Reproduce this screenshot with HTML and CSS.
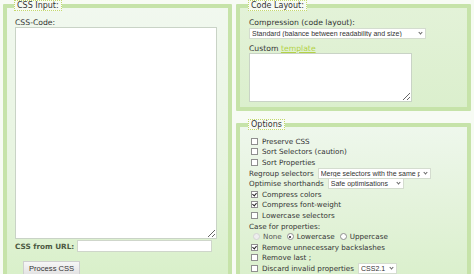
FILE: index.html
```html
<!DOCTYPE html>
<html lang="en">
<head>
    <meta charset="UTF-8">
    <title>CSSTidy</title>
    <link rel="stylesheet" href="styles.css">
</head>
<body>
    <div class="page">
        <!-- Left column: input -->
        <fieldset class="box input-box">
            <legend>CSS Input:</legend>
            <label class="field-label" for="css_text">CSS-Code:</label>
            <textarea id="css_text" class="code-area"></textarea>
            <div class="url-row">
                <label for="url">CSS from URL:</label>
                <input type="text" id="url" class="url-input">
            </div>
            <button class="process">Process CSS</button>
        </fieldset>

        <!-- Right column: layout and options -->
        <div class="side">
            <fieldset class="box layout-box">
                <legend>Code Layout:</legend>
                <label class="field-label" for="template">Compression (code layout):</label>
                <span class="sel wide-select">
                    <select id="template">
                        <option>Standard (balance between readability and size)</option>
                    </select>
                </span>
                <div class="field-label custom">Custom <a href="#">template</a></div>
                <textarea class="template-area"></textarea>
            </fieldset>

            <fieldset class="box options-box">
                <legend>Options</legend>
                <label class="opt"><input type="checkbox"> Preserve CSS</label>
                <label class="opt"><input type="checkbox"> Sort Selectors (caution)</label>
                <label class="opt"><input type="checkbox"> Sort Properties</label>
                <div class="opt-row">Regroup selectors
                    <span class="sel merge-select"><select><option>Merge selectors with the same properties</option></select></span>
                </div>
                <div class="opt-row">Optimise shorthands
                    <span class="sel short-select"><select><option>Safe optimisations</option></select></span>
                </div>
                <label class="opt"><input type="checkbox" checked> Compress colors</label>
                <label class="opt"><input type="checkbox" checked> Compress font-weight</label>
                <label class="opt"><input type="checkbox"> Lowercase selectors</label>
                <div class="opt-row">Case for properties:</div>
                <div class="radios">
                    <label class="off"><input type="radio" name="case" disabled> None</label>
                    <label><input type="radio" name="case" checked> Lowercase</label>
                    <label><input type="radio" name="case"> Uppercase</label>
                </div>
                <label class="opt"><input type="checkbox" checked> Remove unnecessary backslashes</label>
                <label class="opt"><input type="checkbox"> Remove last ;</label>
                <label class="opt"><input type="checkbox"> Discard invalid properties
                    <span class="sel level-select"><select><option>CSS2.1</option></select></span>
                </label>
            </fieldset>
        </div>
    </div>
</body>
</html>
```

FILE: styles.css
```css
/* Basic page styling */
body {
    margin: 0;
    background-color: #f7fbf4;
    font-family: "DejaVu Sans", Verdana, sans-serif;
    font-size: 7.5px;
    color: #333;
    overflow: hidden;
}
.page {
    display: flex;
    gap: 4px;
    padding: 0 3px;
    align-items: flex-start;
}
.box {
    margin: 0;
    border: 4px solid #c6e3a9;
    border-radius: 1px;
    min-width: 0;
}
.box legend {
    font-size: 8px;
    padding: 0 2px;
    margin-left: -1px;
    line-height: 9px;
    border: 1px dotted #c3d86c;
    background-color: #f7fbf4;
}
.input-box {
    width: 229px;
    box-sizing: border-box;
    height: 300px;
    padding: 7px 10px 0 8px;
    background: linear-gradient(#f1f8ef, #e6f4de 60%, #d6efc5);
}
.field-label {
    display: block;
    font-size: 7.7px;
    line-height: 9px;
}
.code-area {
    display: block;
    box-sizing: border-box;
    width: 202px;
    height: 212px;
    margin: 0;
    border: 1px solid #c9d3c6;
    background-color: #fff;
    resize: vertical;
}
.url-row {
    display: flex;
    align-items: center;
    gap: 3px;
    margin-top: 1px;
    font-size: 7.3px;
    font-weight: bold;
    color: #4d5a43;
}
.url-input {
    box-sizing: border-box;
    width: 135px;
    height: 12px;
    border: 1px solid #cfd6cb;
    background-color: #fff;
    padding: 0;
}
.process {
    display: block;
    margin: 9px 0 0 8px;
    height: 15px;
    padding: 0 5px;
    font-family: "Liberation Sans", Arial, sans-serif;
    font-size: 7.6px;
    color: #333;
    border: 1px solid #cfcfcf;
    background: linear-gradient(#f6f6f6, #e2e2e2);
}
.side {
    display: flex;
    flex-direction: column;
    gap: 8px;
    width: 235px;
}
.layout-box {
    box-sizing: border-box;
    padding: 7px 8px 5px 9px;
    background: linear-gradient(#e3f2d8, #dbefcd);
}
/* Selects with a small chevron */
.sel {
    position: relative;
    display: inline-block;
    height: 11px;
}
.sel select {
    appearance: none;
    box-sizing: border-box;
    width: 100%;
    height: 11px;
    margin: 0;
    padding: 0 10px 0 2px;
    font-family: "Liberation Sans", Arial, sans-serif;
    font-size: 7px;
    color: #333;
    border: 1px solid #d4dccf;
    border-radius: 0;
    background-color: #fff;
}
.sel::after {
    content: "";
    position: absolute;
    right: 4px;
    top: 3px;
    width: 2px;
    height: 2px;
    border-right: 1px solid #666;
    border-bottom: 1px solid #666;
    transform: rotate(45deg);
}
.wide-select {
    display: block;
    width: 177px;
    margin-top: 1px;
}
.custom {
    margin-top: 5px;
}
.custom a {
    color: #b3d247;
    text-decoration: underline;
}
.template-area {
    display: block;
    box-sizing: border-box;
    width: 163px;
    height: 49px;
    margin-top: 0;
    border: 1px solid #c9d3c6;
    background-color: #fff;
    resize: vertical;
}
.options-box {
    box-sizing: border-box;
    height: 200px;
    padding: 6px 8px 0 9px;
    background: linear-gradient(#eef7ec, #e2f2d8 50%, #d5eec4);
    font-size: 7.2px;
}
.opt, .opt-row {
    display: flex;
    align-items: center;
    gap: 4px;
    height: 10.6px;
}
.opt {
    padding-left: 2px;
}
.opt input, .radios input {
    appearance: none;
    box-sizing: border-box;
    margin: 0;
    width: 7px;
    height: 7px;
    flex: none;
    border: 1px solid #8f8f8f;
    background-color: #fff;
    position: relative;
}
.opt input:checked::after {
    content: "";
    position: absolute;
    left: 1px;
    top: 0;
    width: 2px;
    height: 3px;
    border-right: 1px solid #222;
    border-bottom: 1px solid #222;
    transform: rotate(40deg);
}
.radios input {
    border-radius: 50%;
}
.radios input:checked::after {
    content: "";
    position: absolute;
    left: 1.5px;
    top: 1.5px;
    width: 2px;
    height: 2px;
    border-radius: 50%;
    background-color: #222;
}
.radios input:disabled {
    border-color: #d4d4d4;
    background-color: #eee;
}
.merge-select {
    width: 113px;
}
.short-select {
    width: 76px;
}
.level-select {
    width: 39px;
}
.radios {
    display: flex;
    align-items: center;
    gap: 5px;
    height: 10.6px;
    padding-left: 4px;
}
.radios label {
    display: flex;
    align-items: center;
    gap: 3px;
}
.radios .off {
    color: #555;
}
```
